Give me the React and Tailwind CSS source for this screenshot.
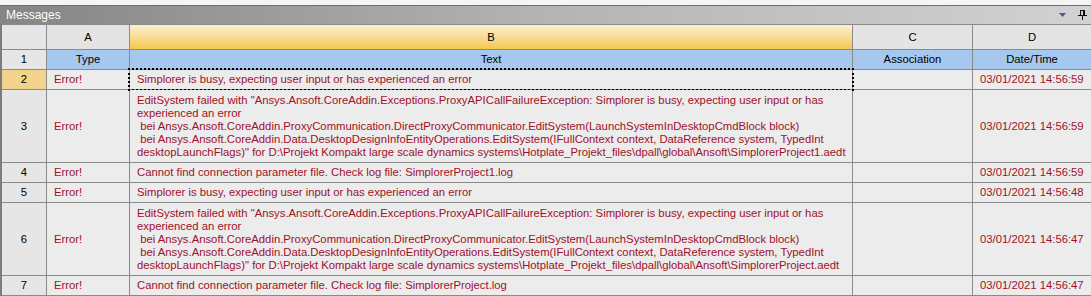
import React from 'react';

const FONT = { fontFamily: '"Liberation Sans", Arial, sans-serif' };

const longText = (file) => [
  'EditSystem failed with "Ansys.Ansoft.CoreAddin.Exceptions.ProxyAPICallFailureException: Simplorer is busy, expecting user input or has',
  'experienced an error',
  ' bei Ansys.Ansoft.CoreAddin.ProxyCommunication.DirectProxyCommunicator.EditSystem(LaunchSystemInDesktopCmdBlock block)',
  ' bei Ansys.Ansoft.CoreAddin.Data.DesktopDesignInfoEntityOperations.EditSystem(IFullContext context, DataReference system, TypedInt',
  'desktopLaunchFlags)" for D:\\Projekt Kompakt large scale dynamics systems\\Hotplate_Projekt_files\\dpall\\global\\Ansoft\\' + file,
];

const rows = [
  { n: 2, text: ['Simplorer is busy, expecting user input or has experienced an error'], date: '03/01/2021 14:56:59', focus: true },
  { n: 3, text: longText('SimplorerProject1.aedt'), date: '03/01/2021 14:56:59' },
  { n: 4, text: ['Cannot find connection parameter file. Check log file: SimplorerProject1.log'], date: '03/01/2021 14:56:59' },
  { n: 5, text: ['Simplorer is busy, expecting user input or has experienced an error'], date: '03/01/2021 14:56:48' },
  { n: 6, text: longText('SimplorerProject.aedt'), date: '03/01/2021 14:56:47' },
  { n: 7, text: ['Cannot find connection parameter file. Check log file: SimplorerProject.log'], date: '03/01/2021 14:56:47' },
];

function PinIcon() {
  return (
    <svg width="9" height="10" viewBox="0 0 9 10" className="block">
      <rect x="2" y="0" width="4" height="1" fill="#111" />
      <rect x="2" y="0" width="1" height="6" fill="#111" />
      <rect x="5" y="0" width="2" height="6" fill="#111" />
      <rect x="0" y="5" width="9" height="1" fill="#111" />
      <rect x="4" y="6" width="1" height="4" fill="#111" />
    </svg>
  );
}

export default function App() {
  return (
    <div className="w-[1091px] h-[296px] overflow-hidden bg-[#f3f3f3] text-[11.3px] leading-[13px]" style={FONT}>
      <div className="h-[5px] bg-[#f5f5f5]" />
      {/* title bar */}
      <div className="h-[19px] border-t border-[#6e6e6e] bg-gradient-to-r from-[#858585] via-[#b4b4b4] to-[#d2d2d2] flex items-center pl-[6px] pr-[4px]">
        <span className="text-white text-[12px]">Messages</span>
        <div className="ml-auto flex items-center gap-[12px]">
          <svg width="7" height="4" viewBox="0 0 7 4" className="block">
            <polygon points="0,0 7,0 3.5,4" fill="#4a5a8c" />
          </svg>
          <PinIcon />
        </div>
      </div>

      {/* grid */}
      <div className="grid grid-cols-[44px_82px_722px_119px_118px] grid-rows-[24px_19px_19px_72px_19px_19px_72px_19px] gap-px bg-[#8a8a8a] pt-px pb-px border-l-2 border-[#7c7c7c]">
        <div className="bg-[#e6e6e6]" />
        <div className="bg-[#e4e4e4] flex items-center justify-center text-black">A</div>
        <div className="bg-gradient-to-b from-[#fbf0d2] to-[#f5c746] flex items-center justify-center text-black">B</div>
        <div className="bg-[#e4e4e4] flex items-center justify-center text-black">C</div>
        <div className="bg-[#e4e4e4] flex items-center justify-center text-black">D</div>

        <div className="bg-[#e6e6e6] flex items-center justify-center text-black">1</div>
        <div className="bg-[#a7c8ee] flex items-center justify-center text-black">Type</div>
        <div className="bg-[#a7c8ee] flex items-center justify-center text-black">Text</div>
        <div className="bg-[#a7c8ee] flex items-center justify-center text-black">Association</div>
        <div className="bg-[#a7c8ee] flex items-center justify-center text-black">Date/Time</div>

        {rows.map((r) => (
          <React.Fragment key={r.n}>
            <div className={`${r.focus ? 'bg-[#f2d48a]' : 'bg-[#e6e6e6]'} flex items-center justify-center text-black`}>{r.n}</div>
            <div className="bg-[#ececec] flex items-center pl-[7px] text-[#a0102a]">Error!</div>
            <div className="relative bg-[#ececec] flex flex-col justify-center pl-[7px] text-[#a0102a]">
              {r.text.map((line, i) => (
                <div key={i} className="whitespace-pre">{line}</div>
              ))}
              {r.focus && <div className="absolute -inset-[2px] border-2 border-dotted border-black" />}
            </div>
            <div className="bg-[#ececec]" />
            <div className="bg-[#ececec] flex items-center pl-[7px] text-[#a0102a]">{r.date}</div>
          </React.Fragment>
        ))}
      </div>
    </div>
  );
}
